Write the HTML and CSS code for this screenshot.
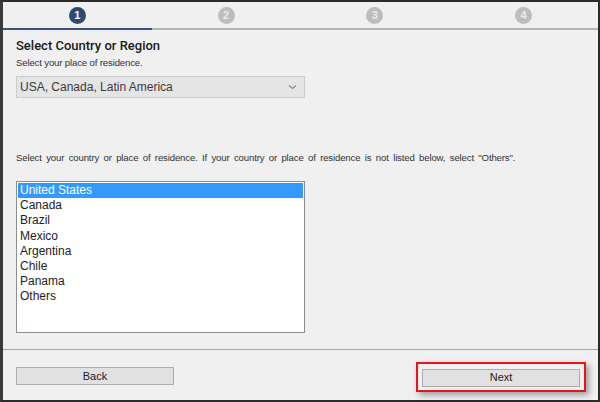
FILE: index.html
```html
<!doctype html>
<html>

<head>
    <title>Setup - Select Country or Region</title>
    <link rel="stylesheet" href="styles.css">
</head>

<body>
    <div class="Window">
        <!-- wizard progress -->
        <div class="Steps">
            <div class="Step active"><span class="StepNum">1</span></div>
            <div class="Step"><span class="StepNum">2</span></div>
            <div class="Step"><span class="StepNum">3</span></div>
            <div class="Step"><span class="StepNum">4</span></div>
        </div>

        <div class="Content">
            <h1 class="Title">Select Country or Region</h1>
            <p class="Hint">Select your place of residence.</p>
            <div class="Combo">
                <span>USA, Canada, Latin America</span>
                <svg class="ComboArrow" width="9" height="6" viewBox="0 0 9 6">
                    <path d="M1 1.5 L4.5 4.5 L8 1.5" fill="none" stroke="#8a8a8a" stroke-width="1.2" />
                </svg>
            </div>

            <p class="Hint ListHint">Select your country or place of residence. If your country or place of residence is not listed below, select "Others".</p>
            <ul class="ListBox">
                <li class="selected">United States</li>
                <li>Canada</li>
                <li>Brazil</li>
                <li>Mexico</li>
                <li>Argentina</li>
                <li>Chile</li>
                <li>Panama</li>
                <li>Others</li>
            </ul>
        </div>

        <div class="Footer">
            <button class="Btn">Back</button>
            <span class="Highlight"><button class="Btn">Next</button></span>
        </div>
    </div>
</body>

</html>
```

FILE: styles.css
```css
html,
body {
    margin: 0;
    background-color: #f0f0f0;
}

.Window {
    box-sizing: border-box;
    width: 600px;
    height: 402px;
    border-top: 2px solid #2b2b2b;
    border-left: 3px solid #3a3a3a;
    border-right: 2px solid #2b2b2b;
    border-bottom: 2px solid #2b2b2b;
    background: #f0f0f0;
    display: flex;
    flex-direction: column;
    font-family: "Liberation Sans", Arial, sans-serif;
    color: #1a1a1a;
}

.Steps {
    display: grid;
    grid-template-columns: repeat(4, 1fr);
    height: 28px;
}

.Step {
    display: flex;
    align-items: center;
    justify-content: center;
    border-bottom: 2px solid #b4b4b4;
}

.Step.active {
    border-bottom-color: #3b5478;
}

.StepNum {
    width: 17px;
    height: 17px;
    border-radius: 50%;
    background: #bdbdbd;
    color: #ececec;
    font-size: 11px;
    font-weight: 700;
    line-height: 17px;
    text-align: center;
    margin-top: 1px;
}

.Step.active .StepNum {
    background: #2f4a72;
    color: #fff;
}

.Content {
    flex: 1;
    padding: 8px 0 0 13px;
}

.Title {
    margin: 0;
    font-family: Roboto, "Liberation Sans", sans-serif;
    font-size: 13px;
    font-weight: 500;
    line-height: 16px;
    color: #1a1a1a;
}

.Hint {
    margin: 2px 0 0;
    font-size: 9.6px;
    line-height: 14px;
    color: #333;
    letter-spacing: -0.15px;
}

.Combo {
    box-sizing: border-box;
    width: 289px;
    height: 22px;
    margin-top: 6px;
    padding: 0 7px 0 3px;
    display: flex;
    align-items: center;
    justify-content: space-between;
    background: #e5e5e5;
    border: 1px solid #cccccc;
    font-size: 12px;
    color: #3a3a3a;
}

.ListHint {
    margin-top: 53px;
    word-spacing: 1.9px;
}

.ListBox {
    box-sizing: border-box;
    width: 289px;
    height: 152px;
    margin: 16px 0 0;
    padding: 1px;
    list-style: none;
    background: #fff;
    border: 1px solid #8a8f97;
}

.ListBox li {
    height: 15.2px;
    line-height: 15px;
    padding-left: 2px;
    font-size: 12px;
    color: #222;
}

.ListBox li.selected {
    background: #3399ff;
    color: #fff;
}

.Footer {
    box-sizing: border-box;
    height: 51px;
    border-top: 1px solid #a8a8a8;
    display: flex;
    align-items: flex-start;
    justify-content: space-between;
    padding: 12px 12px 0 13px;
}

.Btn {
    box-sizing: border-box;
    width: 158px;
    height: 18px;
    margin: 0;
    padding: 0 0 1px;
    background: #e1e1e1;
    border: 1px solid #adadad;
    font-family: "Liberation Sans", Arial, sans-serif;
    font-size: 11px;
    color: #222;
}

.Footer > .Btn {
    margin-top: 5px;
}

/* red callout around the primary action */
.Highlight {
    display: block;
    padding: 3px 4px;
    border: 2px solid #e8141b;
    box-shadow: 3px 3px 6px rgba(0, 0, 0, 0.35);
}
```
